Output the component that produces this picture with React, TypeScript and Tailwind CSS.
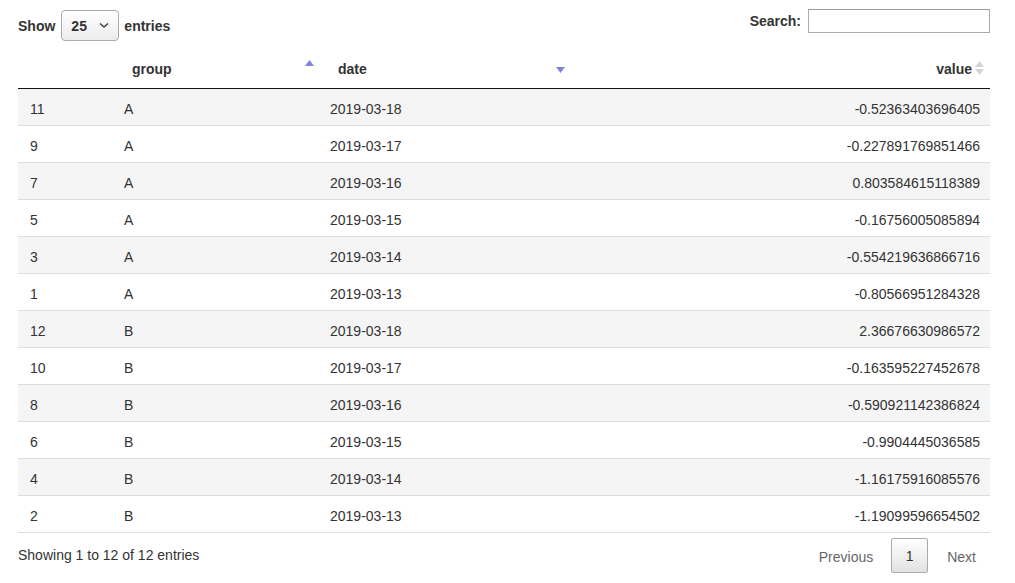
import React from "react";

const rows = [
  ["11", "A", "2019-03-18", "-0.52363403696405"],
  ["9", "A", "2019-03-17", "-0.227891769851466"],
  ["7", "A", "2019-03-16", "0.803584615118389"],
  ["5", "A", "2019-03-15", "-0.16756005085894"],
  ["3", "A", "2019-03-14", "-0.554219636866716"],
  ["1", "A", "2019-03-13", "-0.80566951284328"],
  ["12", "B", "2019-03-18", "2.36676630986572"],
  ["10", "B", "2019-03-17", "-0.163595227452678"],
  ["8", "B", "2019-03-16", "-0.590921142386824"],
  ["6", "B", "2019-03-15", "-0.9904445036585"],
  ["4", "B", "2019-03-14", "-1.16175916085576"],
  ["2", "B", "2019-03-13", "-1.19099596654502"],
];

function Up({ color }: { color: string }) {
  return (
    <svg width="9" height="6" viewBox="0 0 9 6">
      <path d="M4.5 0 L9 6 L0 6 Z" fill={color} />
    </svg>
  );
}

function Down({ color }: { color: string }) {
  return (
    <svg width="9" height="6" viewBox="0 0 9 6">
      <path d="M0 0 L9 0 L4.5 6 Z" fill={color} />
    </svg>
  );
}

export default function App() {
  return (
    <div className="min-h-screen bg-white pl-[18px] pr-[25px] pt-[9px] text-[14px] leading-[20px] text-[#333] font-['Liberation_Sans',Arial,sans-serif]">
      {/* Controls */}
      <div className="flex items-start justify-between">
        <div className="flex items-center pt-[1px] font-bold">
          <span>Show</span>
          <div className="ml-[6px] mr-[5px] flex h-[31px] w-[58px] items-center justify-between rounded-[4px] border border-[#aaa] bg-gradient-to-b from-white to-[#ececec] pl-[9px] pr-[9px]">
            <span>25</span>
            <svg width="10" height="7" viewBox="0 0 10 7">
              <path d="M1 1.5 L5 5 L9 1.5" fill="none" stroke="#444" strokeWidth="1.6" />
            </svg>
          </div>
          <span>entries</span>
        </div>
        <div className="flex items-center gap-[7px] font-bold">
          <span>Search:</span>
          <div className="h-[24px] w-[182px] border border-[#aaa] border-t-[#999] bg-white" />
        </div>
      </div>

      {/* Table */}
      <table className="mt-[7px] w-full table-fixed border-collapse">
        <colgroup>
          <col className="w-[96px]" />
          <col className="w-[206px]" />
          <col className="w-[251px]" />
          <col />
        </colgroup>
        <thead>
          <tr className="border-b border-[#111]">
            <th className="pt-[11px] pb-[9px] pl-[18px] text-left font-bold"></th>
            <th className="relative pt-[11px] pb-[9px] pl-[18px] text-left font-bold">
              group
              <span className="absolute right-[6px] top-[12px] flex">
                <Up color="#7f83dd" />
              </span>
            </th>
            <th className="relative pt-[11px] pb-[9px] pl-[18px] text-left font-bold">
              date
              <span className="absolute right-[6px] top-[19px] flex">
                <Down color="#7f83dd" />
              </span>
            </th>
            <th className="relative pt-[11px] pb-[9px] pr-[18px] text-right font-bold">
              value
              <span className="absolute right-[6px] top-[13px] flex flex-col gap-[2px]">
                <Up color="#d4d4d4" />
                <Down color="#d4d4d4" />
              </span>
            </th>
          </tr>
        </thead>
        <tbody>
          {rows.map((r, i) => (
            <tr
              key={i}
              className={`${i > 0 ? "border-t border-[#ddd]" : ""} ${i % 2 === 0 ? "bg-[#f5f5f5]" : "bg-white"} ${i === rows.length - 1 ? "border-b border-[#111]" : ""}`}
            >
              <td className="pl-[12px] pr-[10px] pt-[10px] pb-[6px]">{r[0]}</td>
              <td className="px-[10px] pt-[10px] pb-[6px]">{r[1]}</td>
              <td className="px-[10px] pt-[10px] pb-[6px]">{r[2]}</td>
              <td className="px-[10px] pt-[10px] pb-[6px] text-right">{r[3]}</td>
            </tr>
          ))}
        </tbody>
      </table>

      {/* Footer */}
      <div className="mt-[4px] flex items-start justify-between">
        <div className="pt-[8px]">Showing 1 to 12 of 12 entries</div>
        <div className="flex items-center gap-[2px]">
          <span className="pl-[14px] pr-[16px] pt-[10px] pb-[6px] text-[#666]">Previous</span>
          <span className="flex h-[35px] w-[37px] items-center justify-center rounded-[2px] border border-[#aaa] bg-gradient-to-b from-white to-[#e2e2e2] pt-[2px]">
            1
          </span>
          <span className="pl-[17px] pr-[14px] pt-[10px] pb-[6px] text-[#666]">Next</span>
        </div>
      </div>
    </div>
  );
}
